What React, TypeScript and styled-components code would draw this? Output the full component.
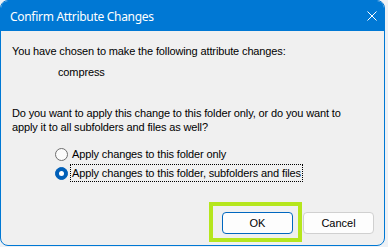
import React from "react";
import styled, { createGlobalStyle } from "styled-components";

const Global = createGlobalStyle`
  html, body { margin: 0; padding: 0; background: #eef1f5; }
  body { width: 388px; height: 247px; overflow: hidden; }
`;

const Window = styled.div`
  width: 385px;
  height: 246px;
  box-sizing: border-box;
  border: 1px solid #0078d4;
  border-radius: 8px;
  background: #f0f0f0;
  overflow: hidden;
  display: flex;
  flex-direction: column;
`;

const TitleBar = styled.div`
  height: 30px;
  background: #0078d4;
  display: flex;
  align-items: center;
  justify-content: space-between;
  padding: 0 0 0 9px;
  flex-shrink: 0;
`;

const Title = styled.span`
  color: #ffffff;
  font-family: "Noto Sans", "Open Sans", sans-serif;
  font-size: 12px;
  letter-spacing: -0.3px;
`;

const CloseBox = styled.div`
  width: 24px;
  height: 30px;
  display: flex;
  align-items: center;
  justify-content: center;
`;

const Body = styled.div`
  flex: 1;
  display: flex;
  flex-direction: column;
  padding: 13px 10px 0 11px;
  font-family: "Liberation Sans", Arial, sans-serif;
  font-size: 11px;
  letter-spacing: -0.13px;
  color: #000;
`;

const Line = styled.div<{ $indent?: number; $mt?: number }>`
  line-height: 14px;
  padding-left: ${(p) => p.$indent ?? 0}px;
  margin-top: ${(p) => p.$mt ?? 0}px;
  white-space: nowrap;
`;

const Options = styled.div`
  display: flex;
  flex-direction: column;
  gap: 5px;
  margin-top: 13px;
  padding-left: 43px;
`;

const OptionRow = styled.label`
  display: flex;
  align-items: center;
  height: 14px;
  gap: 2px;
`;

const Radio = styled.span<{ $checked?: boolean }>`
  width: 13px;
  height: 13px;
  box-sizing: border-box;
  border-radius: 50%;
  flex-shrink: 0;
  position: relative;
  ${(p) =>
    p.$checked
      ? `background: #005fb8; border: 1px solid #005fb8;
         &::after { content: ""; position: absolute; left: 3px; top: 3px; width: 5px; height: 5px; border-radius: 50%; background: #fff; }`
      : `background: #fbfbfb; border: 1px solid #6e6e6e;`}
`;

const OptionText = styled.span<{ $focus?: boolean }>`
  padding: 1px 1px;
  line-height: 14px;
  border: 1px dotted ${(p) => (p.$focus ? "#000" : "transparent")};
`;

const ButtonBar = styled.div`
  margin-top: auto;
  margin-bottom: 11px;
  display: flex;
  justify-content: flex-end;
  gap: 10px;
`;

const Button = styled.button<{ $default?: boolean }>`
  width: 71px;
  height: 22px;
  box-sizing: border-box;
  border-radius: 4px;
  background: #fdfdfd;
  border: 1px solid ${(p) => (p.$default ? "#0067c0" : "#d0d0d0")};
  font-family: "Liberation Sans", Arial, sans-serif;
  font-size: 11px;
  color: #000;
  padding: 0;
  position: relative;
`;

const Highlight = styled.span`
  position: absolute;
  left: -14px;
  top: -11px;
  right: -10px;
  bottom: -9px;
  border: 4px solid #b5e61d;
  pointer-events: none;
`;

export default function App() {
  return (
    <>
      <Global />
      <Window>
        <TitleBar>
          <Title>Confirm Attribute Changes</Title>
          <CloseBox>
            <svg width="10" height="10" viewBox="0 0 10 10">
              <path d="M0.5 0.5 L9.5 9.5 M9.5 0.5 L0.5 9.5" stroke="#fff" strokeWidth="1" />
            </svg>
          </CloseBox>
        </TitleBar>
        <Body>
          <Line>You have chosen to make the following attribute changes:</Line>
          <Line $indent={46} $mt={7}>compress</Line>
          <Line $mt={27}>Do you want to apply this change to this folder only, or do you want to</Line>
          <Line>apply it to all subfolders and files as well?</Line>
          <Options>
            <OptionRow>
              <Radio />
              <OptionText>Apply changes to this folder only</OptionText>
            </OptionRow>
            <OptionRow>
              <Radio $checked />
              <OptionText $focus>Apply changes to this folder, subfolders and files</OptionText>
            </OptionRow>
          </Options>
          <ButtonBar>
            <Button $default>
              OK
              <Highlight />
            </Button>
            <Button>Cancel</Button>
          </ButtonBar>
        </Body>
      </Window>
    </>
  );
}
